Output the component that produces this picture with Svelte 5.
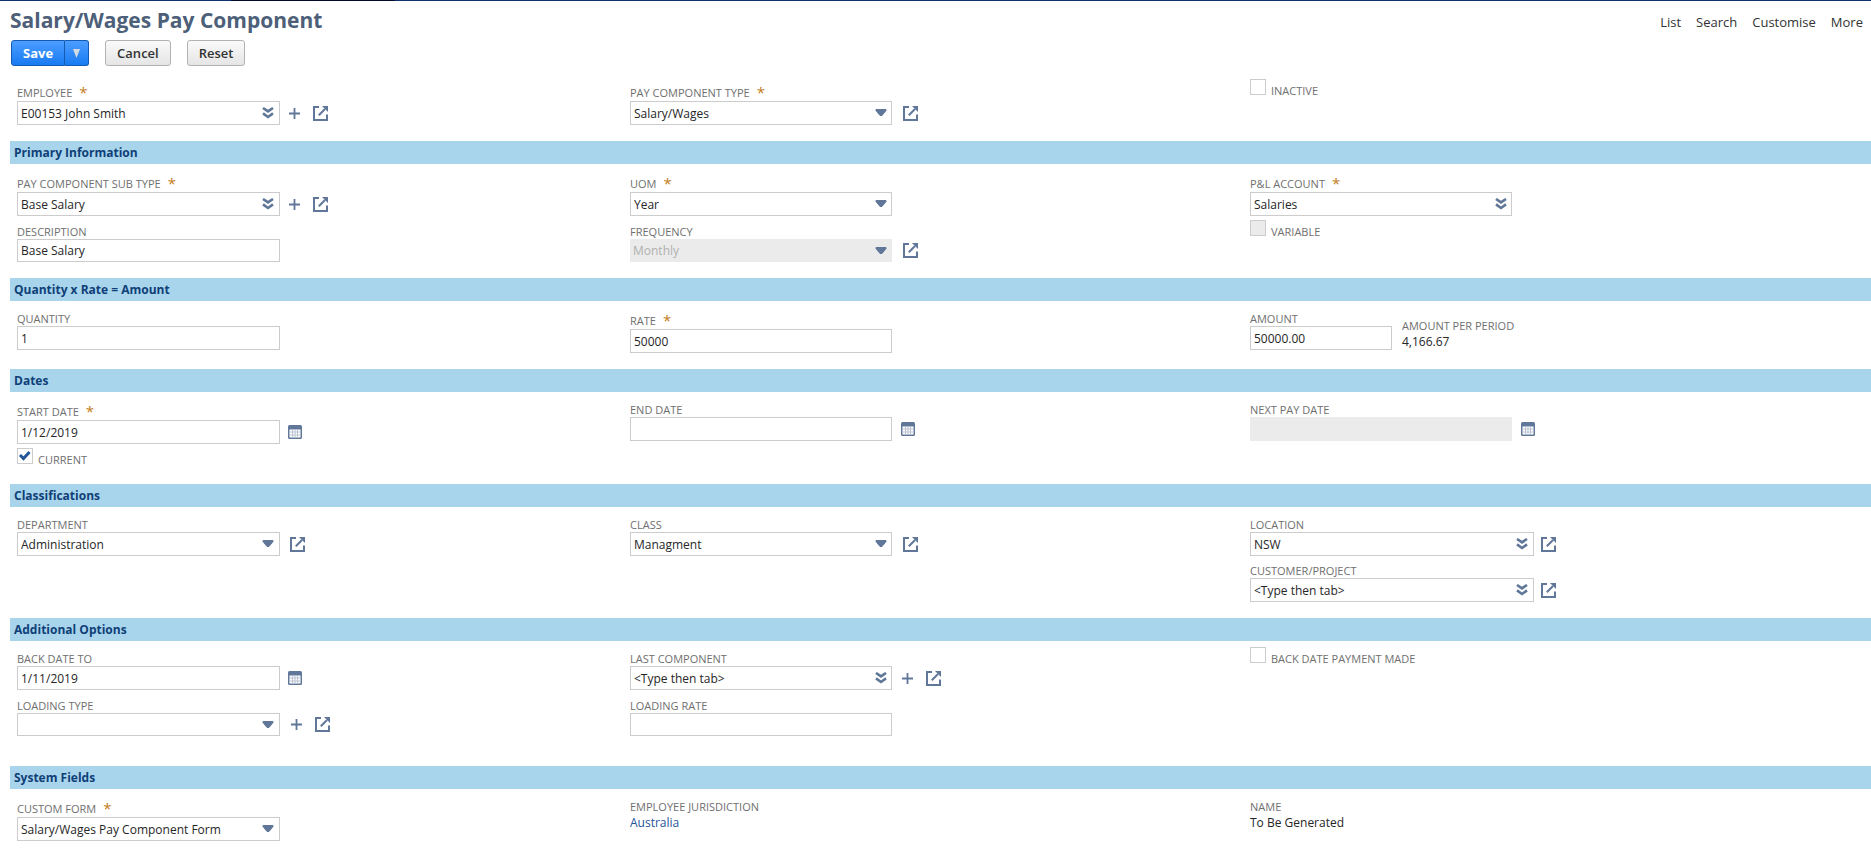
<script>
  const links = ['List', 'Search', 'Customise', 'More'];

  const sections = [
    {
      title: '',
      columns: [
        [{ id: 'employee', label: 'Employee', type: 'combo', value: 'E00153 John Smith', required: true, icons: ['add', 'open'] }],
        [{ id: 'componenttype', label: 'Pay Component Type', type: 'select', value: 'Salary/Wages', required: true, icons: ['open'] }],
        [{ id: 'inactive', label: 'Inactive', type: 'checkbox', checked: false }]
      ]
    },
    {
      title: 'Primary Information',
      columns: [
        [
          { id: 'subtype', label: 'Pay Component Sub Type', type: 'combo', value: 'Base Salary', required: true, icons: ['add', 'open'] },
          { id: 'description', label: 'Description', type: 'text', value: 'Base Salary', compact: true }
        ],
        [
          { id: 'uom', label: 'UOM', type: 'select', value: 'Year', required: true },
          { id: 'frequency', label: 'Frequency', type: 'select', value: 'Monthly', disabled: true, compact: true, icons: ['open'] }
        ],
        [
          { id: 'account', label: 'P&L Account', type: 'combo', value: 'Salaries', required: true },
          { id: 'variable', label: 'Variable', type: 'checkbox', checked: false, disabled: true }
        ]
      ]
    },
    {
      title: 'Quantity x Rate = Amount',
      columns: [
        [{ id: 'quantity', label: 'Quantity', type: 'text', value: '1' }],
        [{ id: 'rate', label: 'Rate', type: 'text', value: '50000', required: true }],
        [{
          id: 'amount', label: 'Amount', type: 'text', value: '50000.00', size: 'small',
          side: { label: 'Amount Per Period', value: '4,166.67' }
        }]
      ]
    },
    {
      title: 'Dates',
      space: 'medium',
      columns: [
        [
          { id: 'startdate', label: 'Start Date', type: 'text', value: '1/12/2019', required: true, icons: ['calendar'] },
          { id: 'current', label: 'Current', type: 'checkbox', checked: true }
        ],
        [{ id: 'enddate', label: 'End Date', type: 'text', value: '', icons: ['calendar'] }],
        [{ id: 'nextpaydate', label: 'Next Pay Date', type: 'text', value: '', disabled: true, icons: ['calendar'] }]
      ]
    },
    {
      title: 'Classifications',
      tight: true,
      columns: [
        [{ id: 'department', label: 'Department', type: 'select', value: 'Administration', icons: ['open'] }],
        [{ id: 'class', label: 'Class', type: 'select', value: 'Managment', icons: ['open'] }],
        [
          { id: 'location', label: 'Location', type: 'combo', value: 'NSW', size: 'wide', icons: ['open'] },
          { id: 'customer', label: 'Customer/Project', type: 'combo', value: '<Type then tab>', size: 'wide', icons: ['open'] }
        ]
      ]
    },
    {
      title: 'Additional Options',
      space: 'large',
      columns: [
        [
          { id: 'backdateto', label: 'Back Date To', type: 'text', value: '1/11/2019', icons: ['calendar'] },
          { id: 'loadingtype', label: 'Loading Type', type: 'select', value: '', compact: true, icons: ['add', 'open'] }
        ],
        [
          { id: 'lastcomponent', label: 'Last Component', type: 'combo', value: '<Type then tab>', icons: ['add', 'open'] },
          { id: 'loadingrate', label: 'Loading Rate', type: 'text', value: '', compact: true }
        ],
        [{ id: 'backdatepaid', label: 'Back Date Payment Made', type: 'checkbox', checked: false }]
      ]
    },
    {
      title: 'System Fields',
      space: 'none',
      columns: [
        [{ id: 'customform', label: 'Custom Form', type: 'select', value: 'Salary/Wages Pay Component Form', required: true }],
        [{ id: 'jurisdiction', label: 'Employee Jurisdiction', type: 'link', value: 'Australia' }],
        [{ id: 'name', label: 'Name', type: 'static', value: 'To Be Generated' }]
      ]
    }
  ];

  const iconTitles = { add: 'New', open: 'Open', calendar: 'Pick a date' };
</script>

{#snippet icon(name)}
  {#if name === 'add'}
    <svg width="13" height="11" viewBox="0 0 13 11" aria-hidden="true">
      <path d="M6.5 0v11M1 5.5h11" fill="none" stroke="#607799" stroke-width="1.8" />
    </svg>
  {:else if name === 'open'}
    <svg width="15" height="15" viewBox="0 0 15 15" aria-hidden="true">
      <path d="M6 1H1v13h13V8.5" fill="none" stroke="#607799" stroke-width="2" />
      <path d="M5.8 9.2L12 3" fill="none" stroke="#607799" stroke-width="2" />
      <path d="M9 0H15v6z" fill="#607799" />
    </svg>
  {:else if name === 'calendar'}
    <svg width="14" height="14" viewBox="0 0 14 14" aria-hidden="true">
      <rect width="14" height="14" rx="1.5" fill="#607799" />
      <rect x="1.5" y="4.5" width="11" height="8" fill="#fff" />
      <path d="M4.5 4.5v8M7 4.5v8M9.5 4.5v8M1.5 7h11M1.5 10h11" stroke="#b9c3d3" stroke-width="1" />
    </svg>
  {:else if name === 'chevrons'}
    <svg width="12" height="12" viewBox="0 0 12 12" aria-hidden="true">
      <path d="M1 1l5 3.400L11 1M1 6.400l5 3.600 5-3.600" fill="none" stroke="#607799" stroke-width="2.600" />
    </svg>
  {:else if name === 'arrow'}
    <svg width="12" height="7" viewBox="0 0 12 7" aria-hidden="true">
      <path d="M1 .5h10v1L7 6.500H5L1 1.500z" fill="#607799" stroke="#607799" stroke-linejoin="round" />
    </svg>
  {/if}
{/snippet}

{#snippet field(f)}
  {#if f.type === 'checkbox'}
    <div class="check-field">
      <input type="checkbox" id={f.id} checked={f.checked} disabled={f.disabled} />
      <label for={f.id}>{f.label}</label>
    </div>
  {:else if f.type === 'static' || f.type === 'link'}
    <div class="field">
      <span class="label">{f.label}</span>
      {#if f.type === 'link'}
        <a class="value" href="#{f.id}">{f.value}</a>
      {:else}
        <span class="value">{f.value}</span>
      {/if}
    </div>
  {:else}
    <div class="field" class:compact={f.compact}>
      <label class="label" class:required={f.required} for={f.id}>
        {f.label}{#if f.required}<span class="star">*</span>{/if}
      </label>
      <div class="row {f.type} {f.size ?? ''}">
        <div class="control">
          {#if f.type === 'select'}
            <select id={f.id} disabled={f.disabled}>
              <option>{f.value}</option>
            </select>
            <span class="arrow">{@render icon('arrow')}</span>
          {:else}
            <input type="text" id={f.id} value={f.value} disabled={f.disabled} />
            {#if f.type === 'combo'}
              <button type="button" class="chevrons" aria-label="Show list">{@render icon('chevrons')}</button>
            {/if}
          {/if}
        </div>
        {#if f.icons}
          <div class="icons">
            {#each f.icons as name}
              <button type="button" aria-label={iconTitles[name]}>{@render icon(name)}</button>
            {/each}
          </div>
        {/if}
      </div>
    </div>
  {/if}
{/snippet}

<div class="page">
  <div class="topline"></div>
  <header>
    <div>
      <h1>Salary/Wages Pay Component</h1>
      <div class="buttons">
        <div class="split">
          <button type="button" class="save">Save</button>
          <button type="button" class="save-menu" aria-label="More save options">
            <svg width="7" height="9" viewBox="0 0 7 9" aria-hidden="true"><path d="M0 0h7L3.5 9z" fill="#d5dbe3" /></svg>
          </button>
        </div>
        <button type="button" class="plain">Cancel</button>
        <button type="button" class="plain">Reset</button>
      </div>
    </div>
    <nav>
      {#each links as link}
        <a href="#{link.toLowerCase()}">{link}</a>
      {/each}
    </nav>
  </header>

  <form>
    {#each sections as section}
      <section>
        {#if section.title}<h2>{section.title}</h2>{/if}
        <div class="columns {section.space ?? ''}" class:tight={section.tight}>
          {#each section.columns as column}
            <div class="column">
              {#each column as f}
                {#if f.side}
                  <div class="pair">
                    {@render field(f)}
                    <div class="side">
                      <span class="label">{f.side.label}</span>
                      <span class="value">{f.side.value}</span>
                    </div>
                  </div>
                {:else}
                  {@render field(f)}
                {/if}
              {/each}
            </div>
          {/each}
        </div>
      </section>
    {/each}
  </form>
</div>

<style>
  :global(body) {
    margin: 0;
    background: #fff;
  }
  .page,
  .page button,
  .page input,
  .page select {
    font-family: "Open Sans", "Noto Sans", sans-serif;
    font-size: 12px;
    color: #262626;
  }
  .page * {
    box-sizing: border-box;
  }
  .page svg {
    display: block;
  }
  .topline {
    height: 1px;
    background: linear-gradient(90deg, #0d346b 231px, #020b2c 231px, #020b2c 395px, #0d346b 395px);
  }

  header {
    display: flex;
    justify-content: space-between;
    align-items: flex-start;
    padding: 4px 8px 7px 10px;
  }
  h1 {
    margin: 0;
    font-size: 21px;
    line-height: 30px;
    font-weight: 700;
    color: #4d5f79;
  }
  .buttons {
    display: flex;
    gap: 16px;
    margin: 5px 0 0 1px;
  }
  .split {
    display: flex;
  }
  .page .buttons button {
    height: 26px;
    padding: 0 11px;
    font-size: 13px;
    font-weight: 600;
    border: 1px solid #b2b2b2;
    border-radius: 3px;
    cursor: pointer;
  }
  .page .buttons .plain {
    background: linear-gradient(#fafafa, #e5e5e5);
    color: #333;
  }
  .page .buttons .save,
  .page .buttons .save-menu {
    background: linear-gradient(#4c9dff, #187bf2);
    border-color: #125ab2;
    color: #fff;
  }
  .page .buttons .save {
    font-weight: 700;
    border-radius: 3px 0 0 3px;
  }
  .page .buttons .save-menu {
    padding: 0 8px;
    border-left: 0;
    border-radius: 0 3px 3px 0;
  }
  nav {
    display: flex;
    gap: 15px;
    padding-top: 8px;
  }
  nav a {
    font-size: 13px;
    line-height: 18px;
    color: #333;
    text-decoration: none;
  }

  form {
    padding-left: 10px;
  }
  h2 {
    margin: 0;
    padding-left: 4px;
    font-size: 12px;
    line-height: 23px;
    font-weight: 700;
    color: #0f3f77;
    background: #a9d5ec;
  }
  .columns {
    display: grid;
    grid-template-columns: repeat(3, 1fr);
    padding: 6px 1px 16px 0;
  }
  .columns.medium {
    padding-bottom: 20px;
  }
  .columns.large {
    padding-bottom: 30px;
  }
  .columns.none {
    padding-bottom: 0;
  }
  .column {
    display: flex;
    flex-direction: column;
    gap: 4px;
  }
  .column:first-child {
    padding-left: 7px;
  }
  .tight .column {
    gap: 3px;
  }

  .field {
    display: flex;
    flex-direction: column;
    align-items: flex-start;
    padding-top: 5px;
  }
  .label,
  .check-field label {
    font-size: 11px;
    line-height: 14px;
    color: #6f6f6f;
    text-transform: uppercase;
  }
  .label.required {
    display: flex;
    gap: 7px;
    line-height: 17px;
  }
  .star {
    font-size: 15px;
    color: #c47d1a;
  }
  .value {
    line-height: 18px;
  }
  a.value {
    color: #255599;
    text-decoration: none;
  }

  .row {
    display: flex;
    align-items: center;
  }
  .control {
    position: relative;
    width: 262px;
    height: 24px;
  }
  .column:first-child .control {
    width: 263px;
    margin-right: -1px;
  }
  .wide .control {
    width: 284px;
  }
  .small .control {
    width: 142px;
  }
  .compact .control {
    height: 23px;
  }
  .control input,
  .control select {
    display: block;
    appearance: none;
    width: 100%;
    height: 100%;
    margin: 0;
    padding: 0 3px;
    border: 1px solid #ccc;
    border-radius: 0;
    background: #fff;
    outline: none;
  }
  .page .control input:disabled,
  .page .control select:disabled {
    padding: 0 2px;
    border-color: #ebebeb;
    background: #ebebeb;
    color: #b0b0b0;
    opacity: 1;
  }
  .arrow {
    position: absolute;
    top: 8px;
    right: 5px;
    pointer-events: none;
  }
  .chevrons {
    position: absolute;
    top: 6px;
    right: 5px;
  }
  .column:first-child .arrow,
  .column:first-child .chevrons,
  .wide .chevrons {
    right: 6px;
  }
  .chevrons,
  .icons button {
    padding: 0;
    border: 0;
    background: none;
    cursor: pointer;
  }
  .icons {
    display: flex;
    align-items: center;
    gap: 12px;
    margin-left: 9px;
  }
  .select .icons {
    margin-left: 11px;
  }
  .wide .icons {
    margin-left: 7px;
  }

  .check-field {
    display: flex;
    align-items: flex-end;
    gap: 5px;
    height: 16px;
  }
  .check-field input {
    appearance: none;
    width: 16px;
    height: 16px;
    margin: 0;
    border: 1px solid #ccc;
    background: #fff;
  }
  .check-field input:disabled {
    background: #ebebeb;
  }
  .check-field input:checked {
    background: url("data:image/svg+xml,%3Csvg xmlns='http://www.w3.org/2000/svg' viewBox='0 0 14 14'%3E%3Cpath d='M2 6l3.500 3.500 6-6.500' fill='none' stroke='%23255599' stroke-width='3'/%3E%3C/svg%3E") center no-repeat;
  }
  .check-field label {
    line-height: 8px;
  }

  .pair {
    display: flex;
    gap: 10px;
  }
  .side {
    display: flex;
    flex-direction: column;
    padding-top: 12px;
  }
</style>
